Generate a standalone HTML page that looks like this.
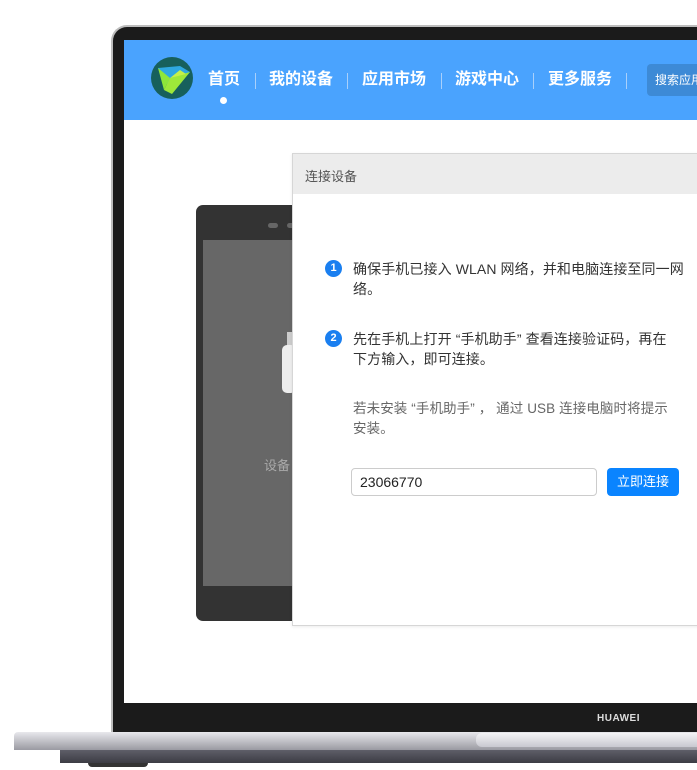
<!DOCTYPE html>
<html><head><meta charset="utf-8"><style>
*{margin:0;padding:0;box-sizing:border-box}
body{width:697px;height:770px;overflow:hidden;background:#fff;position:relative;font-family:"Liberation Sans","Noto Sans CJK SC",sans-serif}
.abs{position:absolute}
.nav{color:#fff;font-weight:bold;font-size:16px;top:69px;line-height:22px}
.sep{width:1px;height:16px;background:#a9d0fb;top:73px}
.t{font-size:14px;color:#333;line-height:20px;letter-spacing:0.1px;white-space:nowrap}
.num{width:17px;height:17px;border-radius:50%;background:#1a7ff0;color:#fff;font-size:11px;font-weight:bold;text-align:center;line-height:17px}
</style></head><body>
<div class="abs" style="left:111px;top:25px;width:620px;height:712px;background:#1b1b1b;border-radius:16px 0 0 0;border:2px solid #bdbdbd;border-right:none;border-bottom:none"></div>
<div class="abs" style="left:124px;top:40px;width:573px;height:663px;background:#fff"></div>
<div class="abs" style="left:124px;top:40px;width:573px;height:80px;background:#4aa3fe"></div>
<svg class="abs" style="left:150px;top:56px" width="44" height="44" viewBox="0 0 44 44">
<circle cx="22" cy="22" r="21" fill="#17605c"/>
<polygon points="8,12 30,10 40,16 22,36" fill="#2fa8e0"/>
<polygon points="8,12 20,22 14,34" fill="#8ee63a"/>
<polygon points="20,22 40,16 22,38 14,34" fill="#9ee83a"/>
<polygon points="20,22 30,14 36,18" fill="#c6f04a"/>
</svg>
<div class="abs nav" style="left:208px">首页</div>
<div class="abs" style="left:220px;top:97px;width:7px;height:7px;border-radius:50%;background:#fff"></div>
<div class="abs sep" style="left:255px"></div>
<div class="abs nav" style="left:269px">我的设备</div>
<div class="abs sep" style="left:347px"></div>
<div class="abs nav" style="left:362px">应用市场</div>
<div class="abs sep" style="left:441px"></div>
<div class="abs nav" style="left:455px">游戏中心</div>
<div class="abs sep" style="left:533px"></div>
<div class="abs nav" style="left:548px">更多服务</div>
<div class="abs sep" style="left:626px"></div>
<div class="abs" style="left:647px;top:64px;width:60px;height:32px;background:#3d8ad6;border-radius:4px;color:#fff;font-size:12px;line-height:32px;padding-left:8px;white-space:nowrap">搜索应用</div>
<div class="abs" style="left:196px;top:205px;width:110px;height:416px;background:#333;border-radius:7px"></div>
<div class="abs" style="left:268px;top:223px;width:10px;height:5px;border-radius:3px;background:#666"></div>
<div class="abs" style="left:287px;top:223px;width:10px;height:5px;border-radius:3px;background:#666"></div>
<div class="abs" style="left:203px;top:240px;width:100px;height:346px;background:#676767"></div>
<div class="abs" style="left:287px;top:332px;width:8px;height:15px;background:#ccc"></div>
<div class="abs" style="left:282px;top:345px;width:14px;height:48px;background:#eee;border-radius:5px"></div>
<div class="abs" style="left:264px;top:455px;color:#aaa;font-size:13px">设备</div>
<div class="abs" style="left:292px;top:153px;width:410px;height:473px;background:#fff;border:1px solid #d6d6d6;box-shadow:0 1px 3px rgba(0,0,0,.08)"></div>
<div class="abs" style="left:293px;top:154px;width:404px;height:40px;background:#ececec"></div>
<div class="abs" style="left:305px;top:166px;font-size:13px;color:#555">连接设备</div>
<div class="abs num" style="left:325px;top:260px">1</div>
<div class="abs t" style="left:353px;top:259px">确保手机已接入 WLAN 网络，并和电脑连接至同一网<br>络。</div>
<div class="abs num" style="left:325px;top:330px">2</div>
<div class="abs t" style="left:353px;top:329px">先在手机上打开 “手机助手” 查看连接验证码，再在<br>下方输入，即可连接。</div>
<div class="abs t" style="left:353px;top:399px;color:#666;font-size:13.5px">若未安装 “手机助手” ， 通过 USB 连接电脑时将提示<br>安装。</div>
<div class="abs" style="left:351px;top:468px;width:246px;height:28px;border:1px solid #ccc;border-radius:4px;font-size:14px;line-height:26px;padding-left:8px;color:#222">23066770</div>
<div class="abs" style="left:607px;top:468px;width:72px;height:28px;background:#0a84ff;border-radius:4px;color:#fff;font-size:13px;line-height:28px;text-align:center">立即连接</div>
<div class="abs" style="left:597px;top:713px;color:#ddd;font-size:10px;font-weight:bold;letter-spacing:.5px">HUAWEI</div>
<div class="abs" style="left:14px;top:732px;width:700px;height:18px;background:linear-gradient(#e8e8ec,#9a9aa2);border-radius:4px 0 0 0"></div>
<div class="abs" style="left:476px;top:733px;width:230px;height:14px;background:linear-gradient(#f4f4f6,#c8c8d0);border-radius:6px 0 0 6px"></div>
<div class="abs" style="left:60px;top:750px;width:660px;height:13px;background:linear-gradient(#5e5e68,#3c3c44)"></div>
<div class="abs" style="left:88px;top:763px;width:60px;height:4px;background:#333;border-radius:0 0 6px 6px"></div>
</body></html>
